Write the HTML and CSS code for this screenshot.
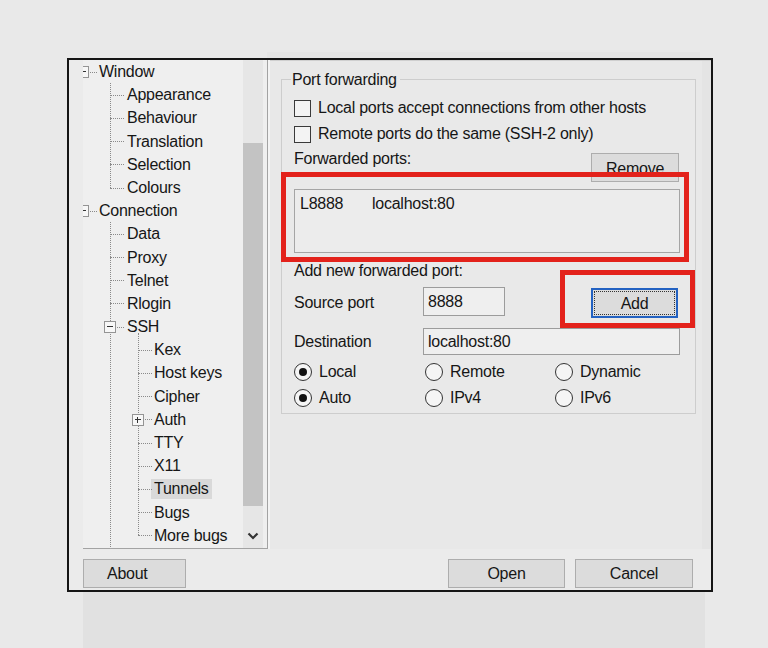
FILE: index.html
```html
<!DOCTYPE html>
<html lang="en">
<head>
    <meta charset="UTF-8">
    <meta name="viewport" content="width=device-width, initial-scale=1.0">
    <title>PuTTY Configuration - Tunnels</title>
    <link rel="stylesheet" href="styles.css">
</head>
<body>

    <div class="shade-top"></div>

    <div class="dialog">
        <div class="main">

            <!-- category tree -->
            <div class="tree">
                <div class="tree-list">
                    <div class="row l0"><span class="exp minus"></span>Window</div>
                    <div class="grp g1 ended">
                        <div class="row l1">Appearance</div>
                        <div class="row l1">Behaviour</div>
                        <div class="row l1">Translation</div>
                        <div class="row l1">Selection</div>
                        <div class="row l1">Colours</div>
                    </div>
                    <div class="row l0"><span class="exp minus"></span>Connection</div>
                    <div class="grp g1">
                        <div class="row l1">Data</div>
                        <div class="row l1">Proxy</div>
                        <div class="row l1">Telnet</div>
                        <div class="row l1">Rlogin</div>
                        <div class="row l1"><span class="exp minus"></span>SSH</div>
                        <div class="grp g2 ended">
                            <div class="row l2">Kex</div>
                            <div class="row l2">Host keys</div>
                            <div class="row l2">Cipher</div>
                            <div class="row l2"><span class="exp plus"></span>Auth</div>
                            <div class="row l2">TTY</div>
                            <div class="row l2">X11</div>
                            <div class="row l2"><span class="sel">Tunnels</span></div>
                            <div class="row l2">Bugs</div>
                            <div class="row l2">More bugs</div>
                        </div>
                    </div>
                </div>
                <div class="scrollbar">
                    <div class="thumb"></div>
                    <div class="arrow">
                        <svg width="12" height="8" viewBox="0 0 12 8"><polyline points="1.5,1.5 6,6 10.5,1.5" fill="none" stroke="#333" stroke-width="2.2"/></svg>
                    </div>
                </div>
            </div>

            <!-- tunnels panel -->
            <div class="panel">
                <fieldset class="group">
                    <legend>Port forwarding</legend>

                    <div class="check"><span class="box"></span>Local ports accept connections from other hosts</div>
                    <div class="check"><span class="box"></span>Remote ports do the same (SSH-2 only)</div>

                    <div class="fwd-head">
                        <span class="fwd-label">Forwarded ports:</span>
                        <button class="btn remove">Remove</button>
                    </div>

                    <div class="list">
                        <span class="col-port">L8888</span><span>localhost:80</span>
                    </div>

                    <div class="add-title">Add new forwarded port:</div>

                    <div class="field source">
                        <span class="field-label">Source port</span>
                        <span class="input short">8888</span>
                        <button class="btn add"><span class="focus">Add</span></button>
                    </div>

                    <div class="field dest">
                        <span class="field-label">Destination</span>
                        <span class="input wide">localhost:80</span>
                    </div>

                    <div class="radios">
                        <div class="radio-item"><span class="radio on"></span>Local</div>
                        <div class="radio-item"><span class="radio"></span>Remote</div>
                        <div class="radio-item"><span class="radio"></span>Dynamic</div>
                        <div class="radio-item"><span class="radio on"></span>Auto</div>
                        <div class="radio-item"><span class="radio"></span>IPv4</div>
                        <div class="radio-item"><span class="radio"></span>IPv6</div>
                    </div>
                </fieldset>

                <!-- red highlight boxes -->
                <div class="mark mark-list"></div>
                <div class="mark mark-add"></div>
            </div>
        </div>

        <div class="buttons">
            <button class="btn about">About</button>
            <button class="btn open">Open</button>
            <button class="btn cancel">Cancel</button>
        </div>
    </div>

    <div class="shade-bottom"></div>

</body>
</html>
```

FILE: styles.css
```css
body {
    margin: 0;
    background-color: #e9e9e9;
    font-family: 'Liberation Sans', Arial, sans-serif;
    font-size: 16px;
    letter-spacing: -0.25px;
    color: #161616;
}

.shade-top {
    margin: 52px 0 0 267px;
    width: 433px;
    height: 6px;
    background-color: #e5e5e5;
}

.dialog {
    margin-left: 67px;
    width: 642px;
    height: 530px;
    border: 2px solid #151515;
    background-color: #ebebeb;
}

.main {
    display: flex;
    height: 489px;
}

/* tree */

.tree {
    display: flex;
    margin-left: 14px;
    width: 184px;
    height: 488px;
    border-right: 1px solid #a3a3a3;
    border-bottom: 1px solid #a3a3a3;
    background-color: #efefef;
}

.tree-list {
    flex: 1;
    position: relative;
    overflow: hidden;
}

.row {
    position: relative;
    height: 23.2px;
    line-height: 23.2px;
    white-space: nowrap;
}

.row::before {
    content: '';
    position: absolute;
    top: 50%;
    border-top: 1px dotted #8a8a8a;
}

.l0 { padding-left: 16px; }
.l0::before { left: 5px; width: 9px; }

.l1 { padding-left: 44px; }
.l1::before { left: 27px; width: 14px; }

.l2 { padding-left: 71px; }
.l2::before { left: 55px; width: 14px; }

.grp {
    position: relative;
}

.grp::before {
    content: '';
    position: absolute;
    top: 0;
    bottom: 0;
    border-left: 1px dotted #8a8a8a;
}

.g1::before { left: 27px; }
.g2::before { left: 55px; top: -5px; }
.grp.ended::before { bottom: 11.6px; }

.exp {
    position: absolute;
    top: 6px;
    width: 10px;
    height: 10px;
    border: 1px solid #949494;
    background-color: #f7f7f7;
    z-index: 1;
}

.exp::before {
    content: '';
    position: absolute;
    left: 2px;
    top: 4px;
    width: 6px;
    height: 1px;
    background-color: #333;
}

.exp.plus::after {
    content: '';
    position: absolute;
    left: 4px;
    top: 2px;
    width: 1px;
    height: 6px;
    background-color: #333;
}

.l0 .exp { left: -6px; }
.l1 .exp { left: 21px; }
.l2 .exp { left: 49px; }

.sel {
    display: inline-block;
    margin-left: -3px;
    padding: 0 3px;
    line-height: 20px;
    background-color: #d9d9d9;
}

.scrollbar {
    position: relative;
    width: 20px;
    margin-right: 4px;
    background-color: #e6e6e6;
}

.thumb {
    margin-top: 83px;
    height: 363px;
    background-color: #c3c3c3;
}

.arrow {
    position: absolute;
    left: 0;
    bottom: 0;
    width: 20px;
    height: 24px;
    display: flex;
    justify-content: center;
    align-items: center;
}

/* panel */

.panel {
    position: relative;
    flex: 1;
    box-shadow: inset 2px 0 #f4f4f4, inset 0 1px #cfcfcf, inset -9px 0 #e4e4e4;
    background-color: #e8e8e8;
}

.group {
    margin: 9px 0 0 13px;
    width: 415px;
    box-sizing: border-box;
    padding: 0 15px 2px 12px;
    border: 1px solid #cdcdcd;
    background-color: #e9e9e9;
}

.group legend {
    margin-left: -3px;
    padding: 2px 3px 0 1px;
    line-height: 18px;
}

.check {
    display: flex;
    align-items: center;
    height: 26px;
}

.check:first-of-type {
    margin-top: 6px;
}

.box {
    width: 15px;
    height: 15px;
    margin-right: 7px;
    border: 1px solid #3a3a3a;
    background-color: #f3f3f3;
}

.fwd-head {
    display: flex;
    justify-content: space-between;
    align-items: flex-start;
    height: 36px;
}

.fwd-label {
    margin-top: 3px;
    line-height: 18px;
}

.btn {
    font-family: inherit;
    font-size: 16px;
    letter-spacing: -0.25px;
    color: #161616;
    background-color: #dcdcdc;
    border: 1px solid #adadad;
    padding: 0;
}

.remove {
    margin: 6px 1px 0 0;
    width: 88px;
    height: 29px;
    padding-top: 2px;
}

.list {
    margin-top: 6px;
    height: 64px;
    box-sizing: border-box;
    padding: 4px 5px;
    border: 1px solid #a5a5a5;
    background-color: #ececec;
    line-height: 20px;
}

.col-port {
    display: inline-block;
    width: 72px;
}

.add-title {
    margin-top: 9px;
    line-height: 18px;
}

.field {
    display: flex;
    align-items: center;
}

.source {
    margin-top: 7px;
    height: 31px;
}

.dest {
    margin-top: 10px;
    height: 27px;
}

.field-label {
    width: 129px;
}

.input {
    box-sizing: border-box;
    padding-left: 4px;
    border: 1px solid #9c9c9c;
    background-color: #efefef;
}

.input.short {
    width: 82px;
    height: 29px;
    line-height: 27px;
    align-self: flex-start;
}

.input.wide {
    width: 257px;
    height: 27px;
    line-height: 25px;
}

.add {
    margin: 0 2px 0 auto;
    width: 87px;
    height: 30px;
    border: 2px solid #2362c2;
    padding: 1px;
}

.add .focus {
    display: block;
    height: 100%;
    box-sizing: border-box;
    border: 1px dotted #333;
    line-height: 24px;
}

.radios {
    display: grid;
    grid-template-columns: 131px 130px 1fr;
    grid-auto-rows: 26px;
    margin-top: 4px;
}

.radio-item {
    display: flex;
    align-items: center;
}

.radio {
    position: relative;
    width: 16px;
    height: 16px;
    margin-right: 7px;
    border: 1px solid #333;
    border-radius: 50%;
    background-color: #f5f5f5;
}

.radio.on::after {
    content: '';
    position: absolute;
    left: 4px;
    top: 4px;
    width: 8px;
    height: 8px;
    border-radius: 50%;
    background-color: #111;
}

.mark {
    position: absolute;
    border: 5px solid #e3221b;
}

.mark-list {
    left: 13px;
    top: 112px;
    width: 398px;
    height: 80px;
}

.mark-add {
    left: 292px;
    top: 210px;
    width: 125px;
    height: 48px;
}

/* bottom buttons */

.buttons {
    display: flex;
    padding-top: 10px;
}

.buttons .btn {
    height: 29px;
}

.about {
    margin-left: 14px;
    width: 103px;
    text-align: left;
    padding-left: 23px;
}

.open {
    margin-left: auto;
    width: 117px;
}

.cancel {
    margin: 0 18px 0 10px;
    width: 118px;
}

.shade-bottom {
    margin-left: 83px;
    width: 622px;
    height: 56px;
    background-color: #e1e1e1;
}
```
